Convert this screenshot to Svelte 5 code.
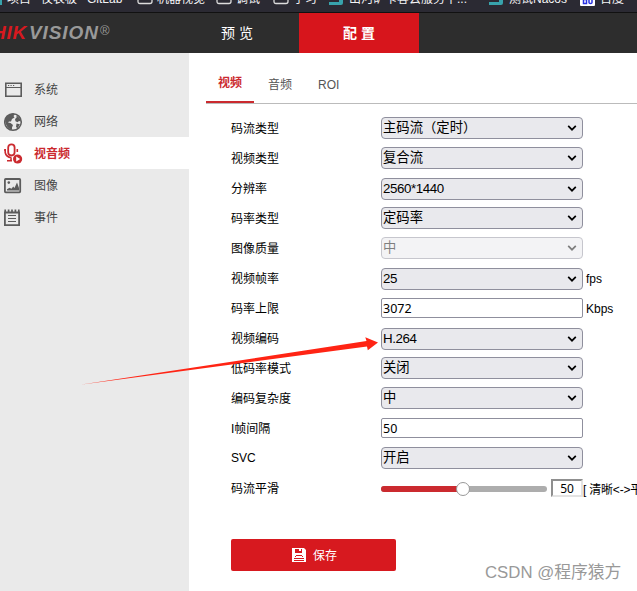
<script>
	let bookmarks = [
		{ icon: 'none', text: '项目', width: 34 },
		{ icon: 'none', text: '仪表板', width: 46 },
		{ icon: 'none', text: 'GitLab', width: 50 },
		{ icon: 'folder', text: '机器视觉', width: 79 },
		{ icon: 'folder', text: '调试', width: 57 },
		{ icon: 'folder', text: '学习', width: 56 },
		{ icon: 'teal', text: '山河矿卡客云服务平...', width: 160 },
		{ icon: 'teal', text: '测试Nacos', width: 91 },
		{ icon: 'baidu', text: '百度', width: 50 }
	]

	let menu = [
		{ id: 'system', text: '系统' },
		{ id: 'network', text: '网络' },
		{ id: 'av', text: '视音频' },
		{ id: 'image', text: '图像' },
		{ id: 'event', text: '事件' }
	]
	let active = 'av'

	let tabs = ['视频', '音频', 'ROI']
	let tab = '视频'

	let fields = [
		{ label: '码流类型', type: 'select', value: '主码流（定时）' },
		{ label: '视频类型', type: 'select', value: '复合流' },
		{ label: '分辨率', type: 'select', value: '2560*1440', latin: true },
		{ label: '码率类型', type: 'select', value: '定码率' },
		{ label: '图像质量', type: 'select', value: '中', disabled: true },
		{ label: '视频帧率', type: 'select', value: '25', latin: true, unit: 'fps' },
		{ label: '码率上限', type: 'input', value: '3072', unit: 'Kbps' },
		{ label: '视频编码', type: 'select', value: 'H.264', latin: true },
		{ label: '低码率模式', type: 'select', value: '关闭' },
		{ label: '编码复杂度', type: 'select', value: '中' },
		{ label: 'I帧间隔', type: 'input', value: '50' },
		{ label: 'SVC', type: 'select', value: '开启' },
		{ label: '码流平滑', type: 'slider', value: 50 }
	]
</script>

<div class="page">
	<div class="bookmarks">
		<i class="edge"></i>
		{#each bookmarks as b}
			<span class="bookmark" style="width: {b.width}px">
				{#if b.icon == 'folder'}
					<svg width="16" height="14" viewBox="0 0 16 14"><path d="M1 2.5h4l2 2h6q2 0 2 2v3q0 2-2 2H3q-2 0-2-2z" fill="none" stroke="#ddd" stroke-width="1.3" /></svg>
				{:else if b.icon == 'teal'}
					<svg width="16" height="14" viewBox="0 0 16 14"><path d="M10 0h4v11q0 2-2 2H0v-3h10z" fill="#38a3ac" /></svg>
				{:else if b.icon == 'baidu'}
					<svg width="16" height="14" viewBox="0 0 16 14"><rect width="15" height="14" rx="1" fill="#fff" /><path d="M3.5 7.5h3v4h-3zM9 7v3.5q0 1 1.5 1t1.5-1V7" fill="none" stroke="#2932e1" stroke-width="1.5" /></svg>
				{/if}
				<span>{b.text}</span>
			</span>
		{/each}
	</div>

	<header>
		<div class="logo"><b>HIK</b><span>VISION</span><sup>®</sup></div>
		<nav>
			<a class="nav" href="#preview">预 览</a>
			<a class="nav current" href="#config">配 置</a>
		</nav>
	</header>

	<div class="body">
		<aside>
			{#each menu as m}
				<div class="item" class:active={m.id == active}>
					<svg width="20" height="22" viewBox="0 0 20 22">
						{#if m.id == 'system'}
							<path d="M1.8 4.3h15.4v12.9H1.8z" fill="none" stroke="currentColor" stroke-width="1.6" />
							<path d="M2 8.5h15M4 6.5h1.2M6.5 6.5h1.2M9 6.5h1.2" stroke="currentColor" />
						{:else if m.id == 'network'}
							<circle cx="9" cy="11" r="8.3" fill="none" stroke="currentColor" stroke-width="1.5" />
							<path d="M1 10Q2 4 7.5 2.8L11 3.2 9.5 5l1 1.5L8 8 7 10.5H5l-1 1 2.5.5 2.5 2-1 2.5V19Q2 17 1 10zM12.5 4.5Q16.5 7 17 10.5l-2-.5-1.5 1.2-2-1L11 8l1.5-1.2zM12.5 12.5l3.5.8-2.5 4-1.5-1.3z" fill="currentColor" />
						{:else if m.id == 'av'}
							<rect x="4.2" y="1.3" width="6.4" height="11.2" rx="3.2" fill="none" stroke="currentColor" stroke-width="1.8" />
							<path d="M1.2 6v3.5Q2 14 7.5 14.7M13.3 6v3M7 15v3M3 17.8h5M0 7h2" fill="none" stroke="currentColor" stroke-width="1.6" />
							<circle cx="13.6" cy="16" r="4.6" fill="currentColor" />
							<path d="M12.2 13.5l3.9 2.5-3.9 2.5z" fill="#fff" />
						{:else if m.id == 'image'}
							<rect x=".9" y="4" width="15.3" height="13.4" rx=".8" fill="none" stroke="currentColor" stroke-width="1.8" />
							<path d="M3 15.5v-1.2l2.5-1.6 2 1 1.7-2.2L10.5 13 13 7.5l2 5.5v2.5z" fill="currentColor" />
							<circle cx="4.8" cy="7.6" r="1.3" fill="currentColor" />
						{:else}
							<path d="M.9 5.5h14.2v12.6H.9z" fill="none" stroke="currentColor" stroke-width="1.8" />
							<path d="M1.2 2.5v3M4.6 2.5v3M8 2.5v3M11.4 2.5v3M14.8 2.5v3" stroke="currentColor" stroke-width="1.7" />
							<path d="M4 8.5h8M4 11.5h8M4 14.5h8" stroke="currentColor" />
						{/if}
					</svg>
					<span>{m.text}</span>
				</div>
			{/each}
		</aside>

		<main>
			<div class="tabs">
				{#each tabs as t}
					<div class="tab" class:selected={t == tab}>{t}</div>
				{/each}
			</div>

			<div class="form">
				{#each fields as f}
					<div class="row">
						<span class="label">{f.label}</span>
						{#if f.type == 'select'}
							<div class="select" class:latin={f.latin} class:disabled={f.disabled}>
								<span>{f.value}</span>
								<svg width="10" height="6" viewBox="0 0 10 6"><path d="M1.2 .9L5 4.7 8.8 .9" fill="none" stroke="currentColor" stroke-width="1.7" /></svg>
							</div>
						{:else if f.type == 'input'}
							<input class="text" bind:value={f.value} />
						{:else}
							<div class="slider">
								<div class="fill" style="width: {f.value}%"></div>
								<div class="thumb"></div>
							</div>
							<input class="number" bind:value={f.value} />
							<span class="range">[ 清晰&lt;-&gt;平滑 ]</span>
						{/if}
						{#if f.unit}
							<span class="unit">{f.unit}</span>
						{/if}
					</div>
				{/each}
			</div>

			<button class="save">
				<svg width="14" height="14" viewBox="0 0 14 14">
					<path d="M0 0h12l2 2v12H0z" fill="#fff" />
					<path d="M3 1h7v4H3zM4 7h6v1H4zM3 8h1v1H3zM10 8h1v1h-1zM2 10h10v1H2zM2 12h10v1H2z" fill="#d7191f" />
					<path d="M7 1h2v2H7z" fill="#fff" />
				</svg>
				<span>保存</span>
			</button>
		</main>
	</div>

	<svg class="arrow" width="300" height="54" viewBox="0 0 300 54">
		<path d="M0 50.8L286.5 7 285.3 3.2 298 8.6 287.8 16.2 287 12.4Z" fill="#ff2414" />
	</svg>
	<div class="watermark">CSDN @程序猿方</div>
</div>

<style>
	:global(body) {
		margin: 0;
		overflow: hidden;
	}

	.page {
		position: relative;
		width: 637px;
		height: 591px;
		overflow: hidden;
		background: #fff;
		color: #000;
		font: 12px 'Liberation Sans', 'Noto Sans CJK SC', sans-serif;
	}

	.bookmarks {
		display: flex;
		box-sizing: border-box;
		height: 13px;
		overflow: hidden;
		background: #2b2a33;
		border-bottom: 1px solid #111;
		color: #f4f4f6;
	}

	.edge {
		flex: none;
		width: 2px;
		height: 5px;
		margin-right: 5px;
		background: #38a3ac;
	}

	.bookmark {
		display: flex;
		flex: none;
		gap: 4px;
		height: 18px;
		margin-top: -8px;
		line-height: 15px;
		white-space: nowrap;
	}

	.bookmark svg {
		flex: none;
	}

	header {
		display: flex;
		height: 40px;
		background: #2d2d2d;
	}

	.logo {
		display: flex;
		width: 179px;
		margin-left: -8px;
		padding-top: 10px;
		box-sizing: border-box;
		line-height: 20px;
		font-size: 19px;
		font-weight: bold;
		font-style: italic;
		color: #999;
	}

	.logo b {
		width: 37px;
		color: #d7191f;
		letter-spacing: .8px;
	}

	.logo span {
		width: 71px;
		letter-spacing: .9px;
	}

	.logo sup {
		font-size: 13px;
		font-weight: normal;
		font-style: normal;
		line-height: 15px;
	}

	nav {
		display: flex;
		margin-left: 8px;
	}

	.nav {
		width: 116px;
		padding-right: 4px;
		line-height: 40px;
		text-align: center;
		font-size: 14px;
		color: #fff;
		text-decoration: none;
	}

	.nav.current {
		width: 120px;
		padding: 0;
		background: #d7151c;
		font-weight: bold;
	}

	.body {
		display: flex;
		height: 538px;
	}

	aside {
		flex: none;
		box-sizing: border-box;
		width: 189px;
		padding-top: 20px;
		background: #eaeaea;
	}

	.item {
		display: flex;
		align-items: center;
		height: 32px;
		padding-left: 4px;
		gap: 10px;
		color: #444;
	}

	.item svg {
		margin-top: 2px;
		color: #5c5c5c;
	}

	.item span {
		margin-top: -2px;
	}

	.item.active {
		background: #fff;
		color: #cb2a2f;
		font-weight: bold;
	}

	.item.active svg {
		color: #cb2a2f;
	}

	main {
		flex: 1;
		min-width: 0;
		padding-left: 17px;
	}

	.tabs {
		display: flex;
		box-sizing: border-box;
		height: 51px;
		padding-top: 14px;
		border-bottom: 1px solid #bbb;
	}

	.tab {
		box-sizing: border-box;
		height: 36px;
		padding: 0 12px;
		margin-right: 2px;
		line-height: 36px;
		color: #555;
	}

	.tab.selected {
		line-height: 32px;
		border-bottom: 2px solid #cb2a2f;
		color: #cb2a2f;
		font-weight: bold;
	}

	.form {
		padding: 9px 0 0 25px;
	}

	.row {
		display: flex;
		align-items: center;
		height: 30px;
		white-space: nowrap;
	}

	.label {
		flex: none;
		width: 150px;
		margin-top: -1px;
	}

	.select {
		display: flex;
		flex: none;
		align-items: center;
		justify-content: space-between;
		box-sizing: border-box;
		width: 202px;
		height: 22px;
		padding: 0 5px 0 1px;
		border: 1px solid #8f8f9d;
		border-radius: 4px;
		background: #e9e9ed;
		font-size: 13.33px;
		line-height: 20px;
	}

	.select.latin {
		margin-top: 2px;
		letter-spacing: -.4px;
	}

	.select.latin span {
		margin-top: -1px;
	}

	.select.disabled {
		opacity: .5;
	}

	.text {
		box-sizing: border-box;
		width: 202px;
		height: 20px;
		padding: 0 1px;
		border: 1px solid #8f8f9d;
		border-radius: 2px;
		background: #fff;
		font: 12.5px 'Noto Sans', sans-serif;
	}

	.unit {
		margin: 1px 0 0 3px;
	}

	.slider {
		display: flex;
		flex: none;
		align-items: center;
		width: 166px;
		height: 6px;
		margin-top: 2px;
		border-radius: 3px;
		background: #adadad;
	}

	.fill {
		height: 6px;
		border-radius: 3px 0 0 3px;
		background: #cb2a2f;
	}

	.thumb {
		flex: none;
		box-sizing: border-box;
		width: 14px;
		height: 14px;
		margin-left: -8px;
		border: 1px solid #999;
		border-radius: 50%;
		background: #fff;
	}

	.number {
		flex: none;
		box-sizing: border-box;
		width: 32px;
		height: 18px;
		margin-left: 4px;
		padding: 0;
		border: 2px solid;
		border-color: #8f8f8f #e3e3e3 #e3e3e3 #8f8f8f;
		text-align: center;
		font: 12px 'Noto Sans', sans-serif;
	}

	.range {
		letter-spacing: -.2px;
	}

	.save {
		display: flex;
		align-items: center;
		justify-content: center;
		gap: 7px;
		width: 165px;
		height: 32px;
		margin: 36px 0 0 25px;
		padding: 0 0 0 2px;
		border: 0;
		border-radius: 2px;
		background: #d7191f;
		color: #fff;
		font: 12px 'Liberation Sans', 'Noto Sans CJK SC', sans-serif;
	}

	.save span {
		margin-top: -2px;
	}

	.arrow {
		position: absolute;
		left: 80px;
		top: 334px;
	}

	.watermark {
		position: absolute;
		left: 485px;
		top: 560px;
		color: #999;
		font-size: 16.8px;
		line-height: 25px;
		white-space: nowrap;
	}
</style>
